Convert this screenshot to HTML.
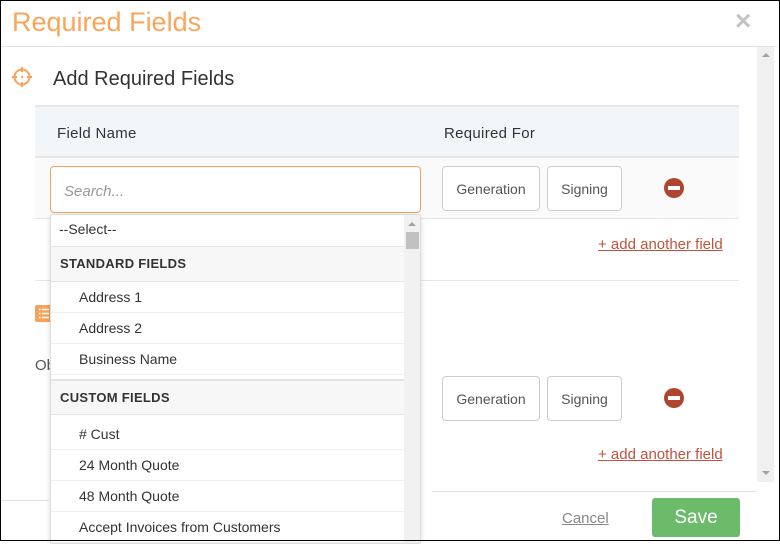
<!DOCTYPE html>
<html><head><style>
*{margin:0;padding:0;box-sizing:border-box}
body{width:780px;height:541px;overflow:hidden;background:#fff;font-family:"Liberation Sans",sans-serif;position:relative}
.a{position:absolute}
.btn{position:absolute;border:1px solid #ccc;border-radius:4px;background:#fff;color:#555;font-size:14px;display:flex;align-items:center;justify-content:center}
.minus{position:absolute;width:20px;height:20px;border-radius:50%;background:#b0452f}
.minus:after{content:"";position:absolute;left:4px;top:8px;width:12px;height:4px;background:#fff}
.link{position:absolute;color:#c0533e;text-decoration:underline;font-size:15px}
.it{position:absolute;left:0;width:353px;height:31px;border-bottom:1px solid #eee;font-size:14px;color:#333;padding-left:28px;line-height:31px}
.hd{position:absolute;left:0;width:353px;height:36px;background:#f7f7f7;border-top:1px solid #e4e4e4;border-bottom:1px solid #e4e4e4;font-size:13px;font-weight:bold;color:#333;padding-left:9px;line-height:34px;letter-spacing:.3px}
</style></head><body>
<div class="a" style="left:0;top:0;width:780px;height:541px;border:1px solid #000;z-index:20;pointer-events:none"></div>
<div class="a" style="left:12px;top:7px;font-size:27px;color:#fba55a">Required Fields</div>
<div class="a" style="left:735px;top:5px;font-size:28px;color:#c4c4c4;font-weight:bold">×</div>
<div class="a" style="left:1px;top:46px;width:776px;height:1px;background:#e2e2e2"></div>
<div class="a" style="left:757px;top:47px;width:17px;height:435px;background:#f0f0f0"></div>
<div class="a" style="left:762px;top:53px;border:4px solid transparent;border-bottom:4px solid #a3a3a3;border-top:0"></div>
<div class="a" style="left:762px;top:471px;border:4px solid transparent;border-top:4px solid #a3a3a3;border-bottom:0"></div>
<svg class="a" style="left:11px;top:66px" width="22" height="22" viewBox="0 0 22 22"><circle cx="11" cy="11" r="7.5" fill="none" stroke="#f7a35c" stroke-width="2"/><path d="M11 1v5M11 16v5M1 11h5M16 11h5" stroke="#f7a35c" stroke-width="2"/><circle cx="11" cy="11" r="1.2" fill="#f7a35c"/></svg>
<div class="a" style="left:53px;top:68px;font-size:20px;color:#333">Add Required Fields</div>
<div class="a" style="left:35px;top:105px;width:704px;height:53px;background:#f3f6f9;border-top:2px solid #e6e6e6;border-bottom:2px solid #e6e6e6"></div>
<div class="a" style="left:57px;top:125px;font-size:15px;color:#333;letter-spacing:.3px">Field Name</div>
<div class="a" style="left:444px;top:125px;font-size:15px;color:#333;letter-spacing:.3px">Required For</div>
<div class="a" style="left:35px;top:158px;width:704px;height:61px;background:#fafafa;border-bottom:1px solid #e6e6e6"></div>
<div class="a" style="left:50px;top:166px;width:371px;height:47px;border:1px solid #f7a35c;border-radius:4px;background:#fff;color:#999;font-style:italic;font-size:15px;padding:16px 0 0 13px">Search...</div>
<div class="btn" style="left:442px;top:166px;width:98px;height:45px">Generation</div>
<div class="btn" style="left:547px;top:166px;width:75px;height:45px">Signing</div>
<div class="minus" style="left:664px;top:178px"></div>
<div class="link" style="left:598px;top:236px">+ add another field</div>
<div class="a" style="left:35px;top:280px;width:704px;height:1px;background:#e6e6e6"></div>
<svg class="a" style="left:35px;top:305px" width="17" height="17" viewBox="0 0 17 17"><rect width="17" height="17" rx="2" fill="#f7a35c"/><path d="M4 4.5h1.5M4 8.5h1.5M4 12.5h1.5M7 4.5h7M7 8.5h7M7 12.5h7" stroke="#fff" stroke-width="1.6"/></svg>
<div class="a" style="left:35px;top:357px;font-size:15px;color:#555">Ob</div>
<div class="btn" style="left:442px;top:376px;width:98px;height:45px">Generation</div>
<div class="btn" style="left:547px;top:376px;width:75px;height:45px">Signing</div>
<div class="minus" style="left:664px;top:388px"></div>
<div class="link" style="left:598px;top:446px">+ add another field</div>
<div class="a" style="left:432px;top:491px;width:325px;height:1px;background:#e2e2e2"></div>
<div class="a" style="left:1px;top:500px;width:48px;height:1px;background:#e2e2e2"></div>
<div class="a" style="left:562px;top:510px;font-size:15px;color:#888;text-decoration:underline">Cancel</div>
<div class="a" style="left:652px;top:498px;width:88px;height:39px;background:#6bbb6b;border-radius:3px;color:#fff;font-size:19px;text-align:center;line-height:39px">Save</div>
<div class="a" style="left:50px;top:214px;width:371px;height:330px;background:#fff;border:1px solid #ddd;border-radius:3px;box-shadow:0 2px 6px rgba(0,0,0,.15);overflow:hidden;z-index:5">
 <div class="a" style="left:353px;top:0;width:17px;height:330px;background:#f1f1f1"></div>
 <div class="a" style="left:357px;top:7px;border:4px solid transparent;border-bottom:4px solid #a3a3a3;border-top:0"></div>
 <div class="a" style="left:355px;top:17px;width:13px;height:17px;background:#c1c1c1"></div>
 <div class="a" style="left:0;top:0;width:353px;height:31px;font-size:14px;color:#333;padding-left:8px;line-height:29px">--Select--</div>
 <div class="hd" style="top:31px">STANDARD FIELDS</div>
 <div class="it" style="top:67px">Address 1</div>
 <div class="it" style="top:98px">Address 2</div>
 <div class="it" style="top:129px">Business Name</div>
 <div class="hd" style="top:164px;border-top:2px solid #e4e4e4">CUSTOM FIELDS</div>
 <div class="it" style="top:204px">&#35; Cust</div>
 <div class="it" style="top:235px">24 Month Quote</div>
 <div class="it" style="top:266px">48 Month Quote</div>
 <div class="it" style="top:297px">Accept Invoices from Customers</div>
</div>
</body></html>
